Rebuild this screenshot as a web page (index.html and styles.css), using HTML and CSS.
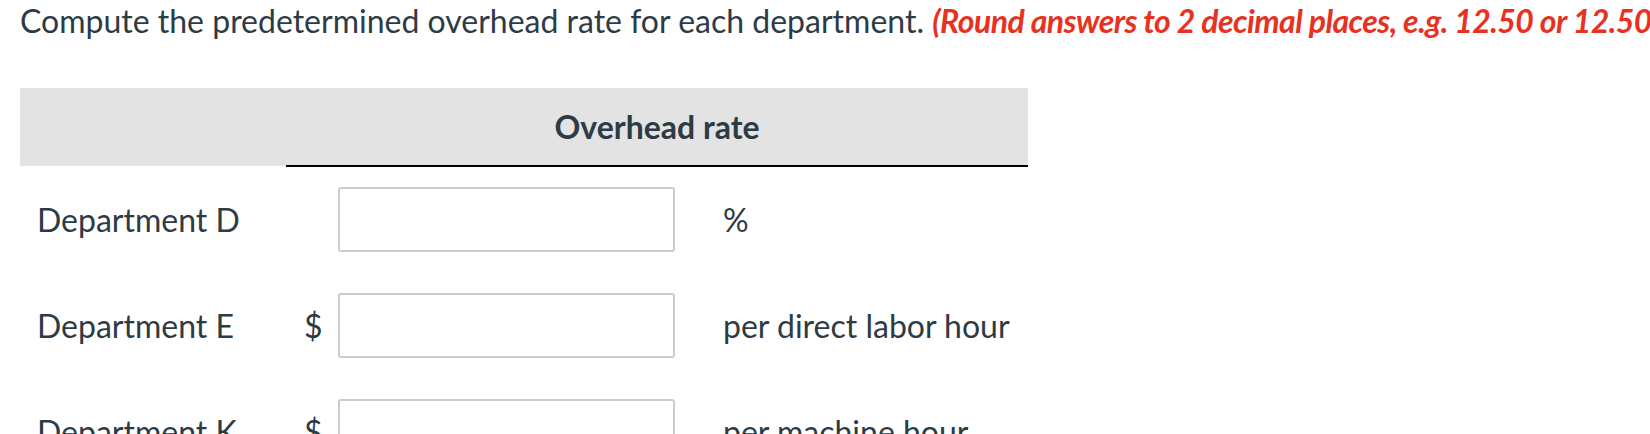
FILE: index.html
```html
<!DOCTYPE html>
<html lang="en">
<head>
<meta charset="utf-8">
<title>Overhead rate</title>
<link rel="stylesheet" href="styles.css">
</head>
<body>
<p class="question">Compute the predetermined overhead rate for each department. <em class="hint">(Round answers to 2 decimal places, e.g. 12.50 or 12.50%.)</em></p>
<table class="grid">
  <thead>
    <tr>
      <th class="corner"></th>
      <th class="colhead">Overhead rate</th>
    </tr>
  </thead>
  <tbody>
    <tr>
      <td class="label">Department D</td>
      <td class="cell"><div class="entry"><span class="cur"></span><input class="box" type="text"><span class="unit">%</span></div></td>
    </tr>
    <tr>
      <td class="label">Department E</td>
      <td class="cell"><div class="entry"><span class="cur">$</span><input class="box" type="text"><span class="unit">per direct labor hour</span></div></td>
    </tr>
    <tr>
      <td class="label">Department K</td>
      <td class="cell"><div class="entry"><span class="cur">$</span><input class="box" type="text"><span class="unit">per machine hour</span></div></td>
    </tr>
  </tbody>
</table>
</body>
</html>
```
FILE: styles.css
```css
html, body {
  margin: 0;
  padding: 0;
  background: #ffffff;
}
body {
  font-family: Lato, "Liberation Sans", sans-serif;
  color: #2d3b45;
  font-size: 32px;
  padding: 0 20px;
  white-space: nowrap;
  overflow: hidden;
}
.question {
  margin: 0;
  padding-top: 1px;
  line-height: 40px;
  white-space: nowrap;
}
.hint {
  color: #e8321f;
  font-weight: 700;
  font-style: italic;
  letter-spacing: -0.55px;
}
.grid {
  margin-top: 47px;
  border-collapse: collapse;
  border-spacing: 0;
}
.grid th {
  background: #e3e3e3;
  height: 78px;
  padding: 0;
  box-sizing: border-box;
  font-weight: 700;
}
.corner {
  width: 266px;
}
.colhead {
  width: 742px;
  border-bottom: 2px solid #000;
  text-align: center;
}
.grid td {
  padding: 20px 0 21px;
  vertical-align: middle;
}
.label {
  padding-left: 17px !important;
}
.entry {
  display: flex;
  align-items: center;
}
.cur {
  width: 52px;
  padding-left: 18px;
  box-sizing: border-box;
}
.box {
  width: 337px;
  height: 65px;
  box-sizing: border-box;
  border: 2px solid #cccccc;
  border-radius: 3px;
  margin: 0 48px 0 0;
  background: #fff;
  font: inherit;
}
.unit {
  line-height: 1;
}
```
